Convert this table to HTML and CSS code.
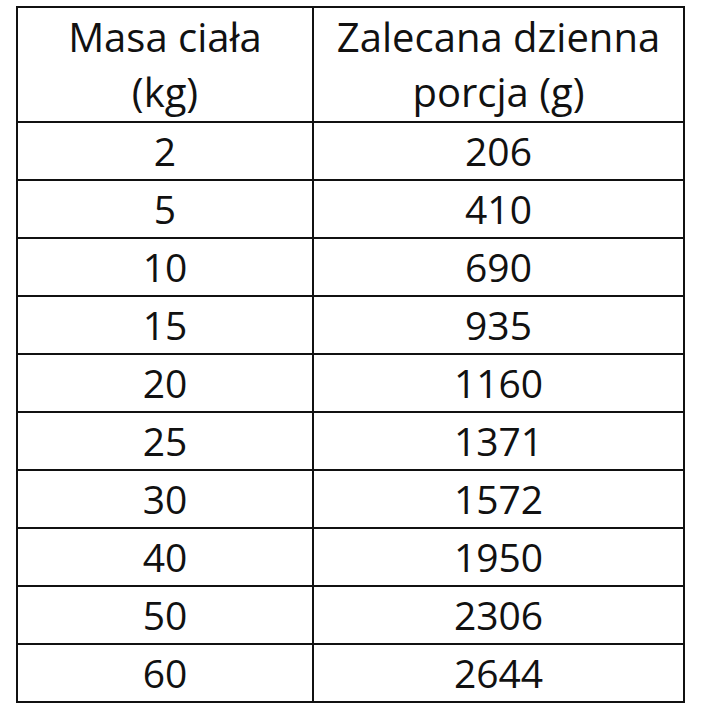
FILE: index.html
```html
<!DOCTYPE html>
<html lang="pl">
<head>
<meta charset="utf-8">
<link rel="stylesheet" href="styles.css">
</head>
<body>
<table class="dose">
  <thead>
    <tr>
      <th class="c1">Masa ciała<br>(kg)</th>
      <th class="c2">Zalecana dzienna<br>porcja (g)</th>
    </tr>
  </thead>
  <tbody>
    <tr><td>2</td><td>206</td></tr>
    <tr><td>5</td><td>410</td></tr>
    <tr><td>10</td><td>690</td></tr>
    <tr><td>15</td><td>935</td></tr>
    <tr><td>20</td><td>1160</td></tr>
    <tr><td>25</td><td>1371</td></tr>
    <tr><td>30</td><td>1572</td></tr>
    <tr><td>40</td><td>1950</td></tr>
    <tr><td>50</td><td>2306</td></tr>
    <tr><td>60</td><td>2644</td></tr>
  </tbody>
</table>
</body>
</html>
```
FILE: styles.css
```css
html, body {
  margin: 0;
  padding: 0;
  background: #fff;
}
body {
  padding: 6px 0 0 16px;
}
.dose {
  border-collapse: collapse;
  width: 669px;
  font-family: "Open Sans", "Noto Sans", sans-serif;
  color: #111;
  font-size: 39px;
  table-layout: fixed;
}
.dose th, .dose td {
  border: 2px solid #111;
  text-align: center;
  padding: 0;
  font-weight: normal;
}
.dose th {
  height: 111px;
  font-size: 40px;
  line-height: 55px;
  vertical-align: middle;
  padding-bottom: 2px;
}
.dose td {
  height: 56px;
  line-height: 56px;
}
.dose .c1 {
  width: 294px;
}
```
